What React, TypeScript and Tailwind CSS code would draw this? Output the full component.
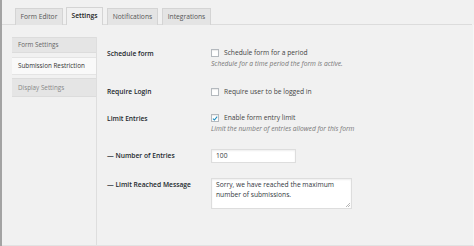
import React from "react";

const font = { fontFamily: '"Open Sans", "Noto Sans", sans-serif' };

function Check({ checked }: { checked?: boolean }) {
  return (
    <span className="w-[8px] h-[8px] bg-white border border-[#b4b9be] shrink-0 flex items-center justify-center shadow-[inset_0_1px_1px_rgba(0,0,0,0.08)]">
      {checked && (
        <svg width="7" height="7" viewBox="0 0 10 10">
          <path d="M1.5 5.2 L4 7.6 L8.6 1.8" fill="none" stroke="#1e8cbe" strokeWidth="1.8" />
        </svg>
      )}
    </span>
  );
}

export default function App() {
  return (
    <div
      className="w-[474px] h-[246px] bg-[#f1f1f1] border-l-2 border-[#a3a3a3] flex flex-col overflow-hidden text-[6.7px] text-[#444]"
      style={font}
    >
      <div className="flex items-end h-[25px] pl-[13px] gap-[3px] border-b border-[#dcdcdc] mr-[2px]">
        <div className="h-[17px] w-[48px] bg-[#e4e4e4] border border-[#d4d4d4] border-b-0 flex items-center justify-center text-[#555] -mb-px">Form Editor</div>
        <div className="h-[18px] w-[37px] bg-[#f1f1f1] border border-[#d4d4d4] border-b-0 flex items-center justify-center text-[#222] font-semibold -mb-px relative z-10">Settings</div>
        <div className="h-[17px] w-[51px] bg-[#e4e4e4] border border-[#d4d4d4] border-b-0 flex items-center justify-center text-[#555] -mb-px ml-[1px]">Notifications</div>
        <div className="h-[17px] w-[49px] bg-[#e4e4e4] border border-[#d4d4d4] border-b-0 flex items-center justify-center text-[#555] -mb-px ml-[1px]">Integrations</div>
      </div>
      <div className="flex flex-1 border-r border-[#f7f7f7] border-b border-b-[#e2e2e2]">
        <div className="w-[95px] pl-[10px] pt-[12px] shrink-0 text-[6.3px]">
          <div className="h-full border-r border-[#dedede] flex flex-col">
            <div className="h-[16px] bg-[#e5e5e5] border-y border-[#dcdcdc] pl-[6px] flex items-center text-[#666]">Form Settings</div>
            <div className="h-[18px] mt-[4px] bg-[#f9f9f9] border-y border-[#e4e4e4] pl-[6px] flex items-center text-[#333]">Submission Restriction</div>
            <div className="h-[19px] mt-[3px] bg-[#e5e5e5] border-y border-[#dcdcdc] pl-[6px] flex items-center text-[#888]">Display Settings</div>
          </div>
        </div>
        <div className="flex flex-col pl-[10px] pt-[23px] text-[#23282d]">
          <div className="flex">
            <div className="w-[104px] font-semibold leading-[10px] pt-[1px]">Schedule form</div>
            <div className="flex flex-col">
              <div className="flex items-center gap-[5px] h-[10px] text-[#444]"><Check />Schedule form for a period</div>
              <div className="italic text-[#777] leading-[10px] mt-[1px]">Schedule for a time period the form is active.</div>
            </div>
          </div>
          <div className="flex mt-[18px]">
            <div className="w-[104px] font-semibold leading-[10px]">Require Login</div>
            <div className="flex items-center gap-[5px] h-[10px] text-[#444]"><Check />Require user to be logged in</div>
          </div>
          <div className="flex mt-[16px]">
            <div className="w-[104px] font-semibold leading-[10px] pt-[1px]">Limit Entries</div>
            <div className="flex flex-col">
              <div className="flex items-center gap-[5px] h-[10px] text-[#444]"><Check checked />Enable form entry limit</div>
              <div className="italic text-[#777] leading-[10px] mt-[1px]">Limit the number of entries allowed for this form</div>
            </div>
          </div>
          <div className="flex mt-[15px] items-center">
            <div className="w-[104px] font-semibold leading-[10px]">— Number of Entries</div>
            <div className="w-[85px] h-[14px] bg-white border border-[#dddddd] shadow-[inset_0_1px_2px_rgba(0,0,0,0.07)] pl-[4px] flex items-center text-[#32373c]">100</div>
          </div>
          <div className="flex mt-[15px]">
            <div className="w-[104px] font-semibold leading-[10px] pt-[2px]">— Limit Reached Message</div>
            <div className="relative w-[141px] h-[31px] bg-white border border-[#dddddd] shadow-[inset_0_1px_2px_rgba(0,0,0,0.07)] px-[4px] pt-[1px] leading-[10px] text-[#32373c]">
              Sorry, we have reached the maximum number of submissions.
              <svg className="absolute right-[1px] bottom-[1px]" width="5" height="5" viewBox="0 0 5 5">
                <path d="M1 5 L5 1 M3 5 L5 3" stroke="#999" strokeWidth="0.7" />
              </svg>
            </div>
          </div>
        </div>
      </div>
    </div>
  );
}
